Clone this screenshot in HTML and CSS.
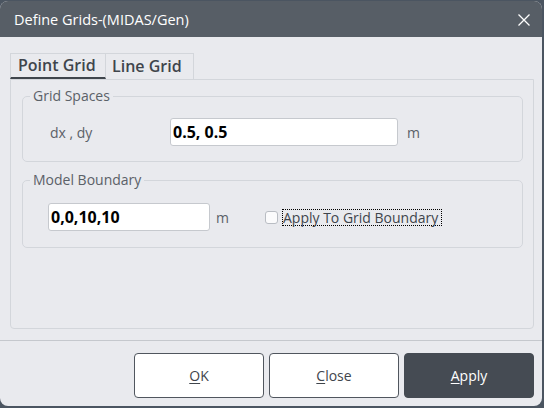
FILE: index.html
```html
<!DOCTYPE html>
<html>
<head>
<meta charset="utf-8">
<link rel="stylesheet" href="styles.css">
</head>
<body>
<div class="dialog">
  <div class="titlebar">
    <span class="title">Define Grids-(MIDAS/Gen)</span>
    <svg class="close" width="14" height="14" viewBox="0 0 14 14"><path d="M1.5 1.5 L12.5 12.5 M12.5 1.5 L1.5 12.5" stroke="#fff" stroke-width="1.3" fill="none"/></svg>
  </div>
  <div class="body">
    <div class="tabs">
      <div class="tab active">Point Grid</div>
      <div class="tab">Line Grid</div>
    </div>
    <div class="panel">
      <fieldset class="group g1">
        <legend>Grid Spaces</legend>
        <div class="row r1">
          <span class="label">dx , dy</span>
          <div class="input w1">0.5, 0.5</div>
          <span class="unit">m</span>
        </div>
      </fieldset>
      <fieldset class="group g2">
        <legend>Model Boundary</legend>
        <div class="row r2">
          <div class="input w2">0,0,10,10</div>
          <span class="unit u2">m</span>
          <span class="check"></span>
          <span class="checklabel">Apply To Grid Boundary</span>
        </div>
      </fieldset>
    </div>
  </div>
  <div class="separator"></div>
  <div class="footer">
    <div class="btn"><u>O</u>K</div>
    <div class="btn"><u>C</u>lose</div>
    <div class="btn primary"><u>A</u>pply</div>
  </div>
</div>
</body>
</html>
```
FILE: styles.css
```css
html, body {
  margin: 0;
  padding: 0;
}
body {
  width: 544px;
  height: 408px;
  background: #4b5561;
  font-family: "Open Sans", "Noto Sans", sans-serif;
  overflow: hidden;
}
.dialog {
  width: 542px;
  height: 405px;
  margin-top: 1px;
  background: #e9eaee;
  border-radius: 8px;
  overflow: hidden;
}
.titlebar {
  height: 36px;
  background: #575e66;
  color: #fff;
  display: flex;
  align-items: center;
  justify-content: space-between;
  padding: 0 11px 0 14px;
}
.title {
  font-size: 14.5px;
  line-height: 18px;
  margin-top: 1px;
}
.close {
  display: block;
  margin-top: 2px;
}
.body {
  padding: 16px 8px 0 10px;
}
.tabs {
  display: flex;
  height: 26px;
  box-sizing: border-box;
}
.tab {
  box-sizing: border-box;
  height: 26px;
  border-top: 1px solid #d3d6db;
  border-right: 1px solid #d3d6db;
  font-size: 16px;
  font-weight: 600;
  color: #3f454c;
  line-height: 24px;
  padding-left: 7px;
}
.tab.active {
  width: 96px;
  border-left: 1px solid #d3d6db;
  border-bottom: 2px solid #3f454c;
  line-height: 22px;
}
.tab:not(.active) {
  width: 88px;
  padding-left: 6px;
}
.panel {
  box-sizing: border-box;
  height: 250px;
  border: 1px solid #d3d6db;
  border-radius: 0 0 4px 4px;
  padding: 7px 0 0 11px;
}
.group {
  box-sizing: border-box;
  width: 501px;
  margin: 0;
  border: 1px solid #d3d6db;
  border-radius: 5px;
  min-width: 0;
  padding-left: 0;
  padding-right: 0;
}
.group legend {
  font-size: 14px;
  line-height: 18px;
  color: #5b6168;
  padding: 0 3px;
  margin-left: 7px;
}
.g1 {
  padding-top: 13px;
  padding-bottom: 15px;
}
.g2 {
  margin-top: 9px;
  padding-top: 14px;
  padding-bottom: 16px;
}
.row {
  display: flex;
  align-items: center;
  height: 28px;
}
.r1 { margin-left: 27px; }
.r2 { margin-left: 25px; }
.label {
  width: 120px;
  font-size: 14px;
  color: #5b6168;
}
.input {
  box-sizing: border-box;
  height: 28px;
  background: #fff;
  border: 1px solid #c6c9ce;
  border-radius: 3px;
  font-family: "Noto Sans", sans-serif;
  font-weight: 700;
  font-size: 16px;
  color: #000;
  line-height: 26px;
  padding-left: 2px;
}
.w1 { width: 228px; }
.w2 { width: 162px; }
.unit {
  font-size: 14px;
  color: #5b6168;
  margin-left: 9px;
}
.u2 {
  margin-left: 6px;
}
.check {
  box-sizing: border-box;
  width: 13px;
  height: 13px;
  border: 1px solid #b9bdc3;
  border-radius: 3px;
  background: #fbfbfc;
  margin-left: 36px;
}
.checklabel {
  margin-left: 4px;
  font-size: 14px;
  line-height: 15px;
  color: #3f454c;
  border: 1px dotted #000;
  padding: 0 3px 0 0;
}
.separator {
  margin-top: 11px;
  height: 1px;
  background: #c5c8cd;
}
.footer {
  display: flex;
  justify-content: flex-end;
  gap: 5px;
  padding: 12px 8px 0 0;
}
.btn {
  box-sizing: border-box;
  width: 130px;
  height: 45px;
  background: #fff;
  border: 1px solid #50565e;
  border-radius: 4px;
  display: flex;
  align-items: center;
  justify-content: center;
  font-size: 14px;
  color: #3f454c;
}
.btn u {
  text-decoration-thickness: 1px;
  text-underline-offset: 2px;
}
.btn.primary {
  background: #454b53;
  border-color: #454b53;
  color: #fff;
}
```
